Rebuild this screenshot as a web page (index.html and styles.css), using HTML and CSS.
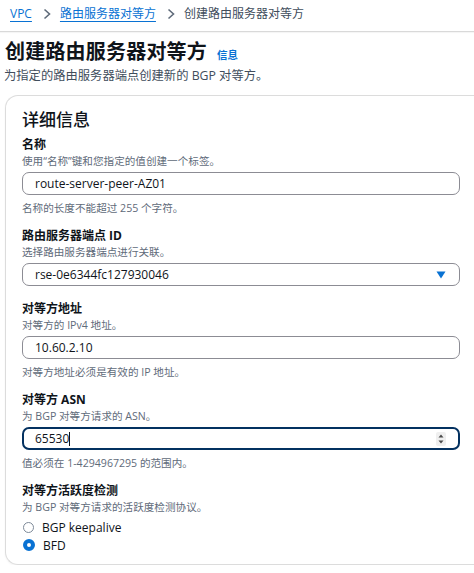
FILE: index.html
```html
<!DOCTYPE html>
<html lang="zh-CN">
<head>
<meta charset="utf-8">
<link rel="stylesheet" href="styles.css">
</head>
<body>
<nav class="crumbs">
  <a class="crumb-link">VPC</a>
  <span class="chev"><svg width="8" height="12" viewBox="0 0 8 12"><path d="M1.5 1.5 L6.5 6 L1.5 10.5" fill="none" stroke="#5f6b7a" stroke-width="1.6"/></svg></span>
  <a class="crumb-link">路由服务器对等方</a>
  <span class="chev"><svg width="8" height="12" viewBox="0 0 8 12"><path d="M1.5 1.5 L6.5 6 L1.5 10.5" fill="none" stroke="#5f6b7a" stroke-width="1.6"/></svg></span>
  <span class="crumb-current">创建路由服务器对等方</span>
</nav>
<header class="page-head">
  <h1 class="title">创建路由服务器对等方<span class="info">信息</span></h1>
  <p class="subtitle">为指定的路由服务器端点创建新的 BGP 对等方。</p>
</header>
<section class="card">
  <h2 class="card-title">详细信息</h2>

  <div class="field">
    <div class="label">名称</div>
    <div class="hint">使用“名称”键和您指定的值创建一个标签。</div>
    <div class="input">route-server-peer-AZ01</div>
    <div class="constraint">名称的长度不能超过 255 个字符。</div>
  </div>

  <div class="field loose">
    <div class="label">路由服务器端点 ID</div>
    <div class="hint">选择路由服务器端点进行关联。</div>
    <div class="input select"><span>rse-0e6344fc127930046</span>
      <svg class="caret" width="10" height="8" viewBox="0 0 10 8"><path d="M0.5 0.5 L9.5 0.5 L5 7.5 Z" fill="#0972d3"/></svg>
    </div>
  </div>

  <div class="field">
    <div class="label">对等方地址</div>
    <div class="hint">对等方的 IPv4 地址。</div>
    <div class="input">10.60.2.10</div>
    <div class="constraint">对等方地址必须是有效的 IP 地址。</div>
  </div>

  <div class="field">
    <div class="label">对等方 ASN</div>
    <div class="hint">为 BGP 对等方请求的 ASN。</div>
    <div class="input focused"><span>65530<span class="cursor"></span></span>
      <svg class="spin" width="10" height="14" viewBox="0 0 10 14"><rect x="0" y="0" width="10" height="14" rx="2" fill="#efefef"/><path d="M2.5 5.5 L5 2.5 L7.5 5.5 Z M2.5 8.5 L5 11.5 L7.5 8.5 Z" fill="#4a4a4a"/></svg>
    </div>
    <div class="constraint">值必须在 1-4294967295 的范围内。</div>
  </div>

  <div class="field last">
    <div class="label">对等方活跃度检测</div>
    <div class="hint">为 BGP 对等方请求的活跃度检测协议。</div>
    <div class="radios">
      <div class="radio"><span class="dot"></span><span>BGP keepalive</span></div>
      <div class="radio"><span class="dot on"></span><span>BFD</span></div>
    </div>
  </div>
</section>
</body>
</html>
```
FILE: styles.css
```css
html, body {
  margin: 0;
  padding: 0;
  background: #ffffff;
}
body {
  font-family: "Open Sans", "Noto Sans", "Noto Sans CJK SC", sans-serif;
  color: #0f141a;
  width: 474px;
  overflow: hidden;
}
.crumbs {
  display: flex;
  align-items: center;
  height: 32px;
  box-sizing: border-box;
  padding: 0 0 4px 10px;
  border-bottom: 1px solid #d9d9d9;
  font-size: 12px;
  line-height: 16px;
  box-shadow: 0 1px 1px rgba(0,0,0,0.04);
}
.crumb-link {
  color: #0972d3;
  text-decoration: underline;
  text-underline-offset: 3px;
}
.chev {
  display: flex;
  margin: 0 9px 0 11px;
}
.crumb-current {
  color: #414d5c;
}
.page-head {
  padding: 7px 0 0 5px;
}
.title {
  margin: 0;
  height: 26px;
  font-size: 20px;
  line-height: 26px;
  font-weight: 700;
  letter-spacing: 0.2px;
}
.info {
  font-size: 10.5px;
  font-weight: 700;
  color: #0972d3;
  margin-left: 10px;
  letter-spacing: 0;
}
.subtitle {
  margin: 3px 0 0 -1px;
  height: 16px;
  font-size: 12.3px;
  line-height: 16px;
  color: #414d5c;
}
.card {
  margin: 11px 0 0 5px;
  border: 1px solid #dcdcdc;
  border-right: none;
  border-radius: 13px 0 0 13px;
  padding: 12px 0 10px 16px;
  box-shadow: 0 1px 2px rgba(0,0,0,0.05);
}
.card-title {
  margin: 0 0 5px;
  height: 24px;
  font-size: 17px;
  line-height: 24px;
  font-weight: 500;
}
.field {
  width: 438px;
  margin-bottom: 12px;
}
.field.loose {
  margin-bottom: 15px;
}
.field.last {
  margin-bottom: 0;
}
.label {
  height: 16px;
  font-size: 12px;
  line-height: 16px;
  font-weight: 700;
}
.hint, .constraint {
  height: 16px;
  font-size: 10.6px;
  line-height: 16px;
  color: #5f6b7a;
}
.constraint {
  margin-top: 5px;
}
.input {
  margin-top: 3px;
  height: 23px;
  box-sizing: border-box;
  border: 1px solid #8c8c94;
  border-radius: 7px;
  padding: 0 12px;
  display: flex;
  align-items: center;
  justify-content: space-between;
  font-size: 12px;
  color: #0f141a;
}
.input.focused {
  border: 2px solid #033160;
  padding: 0 11px;
}
.cursor {
  display: inline-block;
  width: 1px;
  height: 14px;
  background: #0f141a;
  vertical-align: -3px;
}
.caret {
  margin-right: 1px;
}
.spin {
  margin-right: 1px;
}
.radios {
  margin-top: 3px;
  display: flex;
  flex-direction: column;
}
.radio {
  display: flex;
  align-items: center;
  gap: 8px;
  height: 18px;
  font-size: 12px;
  padding-left: 1px;
}
.dot {
  width: 9px;
  height: 9px;
  border: 1.5px solid #7d8998;
  border-radius: 50%;
  box-sizing: content-box;
}
.dot.on {
  width: 4px;
  height: 4px;
  border: 4px solid #0972d3;
}
```
